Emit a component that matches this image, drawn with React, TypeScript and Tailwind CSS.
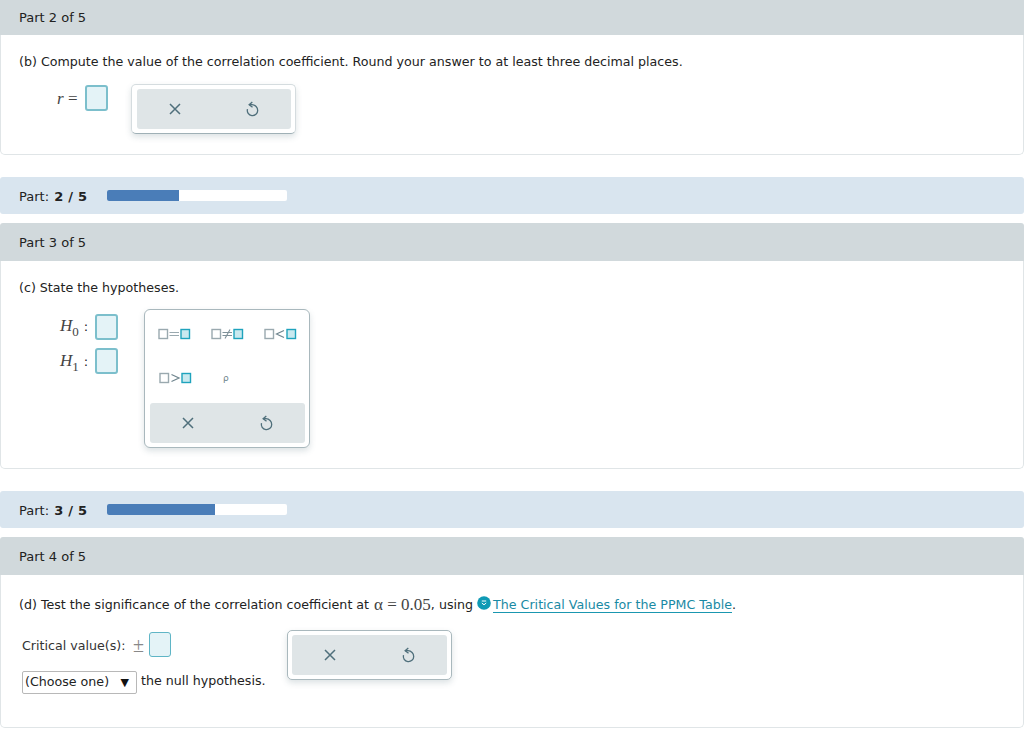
import React from "react";

const F = "font-['DejaVu_Sans',sans-serif]";
const M = "font-['Liberation_Serif',serif]";

function XIcon() {
  return (
    <svg width="14" height="14" viewBox="0 0 14 14" fill="none" stroke="#4f6f7b" strokeWidth="1.5">
      <path d="M2 2 L12 12 M12 2 L2 12" />
    </svg>
  );
}
function UndoIcon() {
  return (
    <svg width="13" height="16" viewBox="0 0 14 17" fill="none" stroke="#4f6f7b" strokeWidth="1.4">
      <path d="M6.8 1 L3.4 3.8 L7 6.6" />
      <path d="M3.4 3.8 H6.5 C10 4 12.6 6.8 12.6 10 A5.6 5.6 0 1 1 1.6 8.6" />
    </svg>
  );
}
function ActionBar({ className }: { className: string }) {
  return (
    <div className={`flex h-10 items-center justify-between rounded-[3px] bg-[#dfe5e7] pl-[31px] pr-[32px] ${className}`}>
      <XIcon />
      <UndoIcon />
    </div>
  );
}
function Box({ className = "" }: { className?: string }) {
  return <div className={`h-[26px] w-[23px] rounded-[3px] border-2 border-[#7cbfcc] bg-[#e4f3f7] ${className}`} />;
}
function Header({ text, h }: { text: string; h: string }) {
  return (
    <div className={`flex items-center bg-[#d1d9dc] pl-[19px] text-[13px] text-[#222] ${h}`}>{text}</div>
  );
}
function Progress({ n, w }: { n: number; w: string }) {
  return (
    <div className="flex h-[37px] items-center rounded-[3px] bg-[#d9e5ef] pl-[19px] text-[13px] text-[#222]">
      <span className="w-[88px] whitespace-pre pt-[2px]">
        Part: <b className="ml-[1px] [word-spacing:0.5px]">{n} / 5</b>
      </span>
      <div className="h-[11px] w-[180px] overflow-hidden rounded-[2px] bg-white">
        <div className={`h-full bg-[#4a7db8] ${w}`} />
      </div>
    </div>
  );
}
function Card({ className, children }: { className: string; children: React.ReactNode }) {
  return (
    <div className={`rounded-b-[5px] border-x border-b border-[#e0e5e7] bg-white text-[12.65px] text-[#222] ${className}`}>
      {children}
    </div>
  );
}
function Sym({ kind }: { kind: "eq" | "ne" | "lt" | "gt" }) {
  return (
    <svg width="33" height="12" viewBox="0 0 33 12" fill="none">
      <rect x="1" y="1.5" width="8.5" height="9" fill="#fff" stroke="#9aa9af" strokeWidth="1.4" />
      {kind === "eq" && <path d="M11.5 4.5 H21 M11.5 7.5 H21" stroke="#9aa9af" strokeWidth="1.2" />}
      {kind === "ne" && <path d="M11.5 4.5 H21 M11.5 7.5 H21 M19 1.5 L14 10.5" stroke="#7f9199" strokeWidth="1.1" />}
      {kind === "lt" && <path d="M20 2.5 L12.5 6 L20 9.5" stroke="#6f858e" strokeWidth="1.2" />}
      {kind === "gt" && <path d="M12.5 2.5 L20 6 L12.5 9.5" stroke="#6f858e" strokeWidth="1.2" />}
      <rect x="23" y="1.5" width="8.5" height="9" fill="#c9e9ef" stroke="#1fa3bd" strokeWidth="1.4" />
    </svg>
  );
}

export default function App() {
  return (
    <div className={`h-[734px] w-[1024px] overflow-hidden bg-white ${F}`}>
      <Header text="Part 2 of 5" h="h-[35px]" />
      <Card className="h-[120px]">
        <p className="ml-[18px] pt-[19px] leading-4">
          (b) Compute the value of the correlation coefficient. Round your answer to at least three decimal places.
        </p>
        <div className="mt-[14px] flex items-start">
          <div className={`ml-[56px] mt-[7px] w-[28px] whitespace-pre text-[17px] leading-4 text-[#444] ${M}`}>
            <i>r</i> =
          </div>
          <Box className="mt-px" />
          <div className="ml-[23px] h-[50px] w-[165px] rounded-[5px] border border-[#d5dcdf] border-b-[#9fb0b6] bg-white p-[4px] shadow-[0_3px_6px_rgba(80,110,120,0.2)]">
            <ActionBar className="ml-px w-[154px]" />
          </div>
        </div>
      </Card>
      <div className="mt-[22px]">
        <Progress n={2} w="w-[72px]" />
      </div>
      <div className="mt-[9px]">
        <Header text="Part 3 of 5" h="h-[38px] rounded-t-[3px] pt-[2px]" />
      </div>
      <Card className="h-[208px]">
        <p className="ml-[18px] pt-[19px] leading-4">(c) State the hypotheses.</p>
        <div className="mt-[13px] flex items-start">
          <div className="ml-[59px] mt-[7px] w-[35px]">
            <div className={`whitespace-pre text-[17px] leading-[20px] text-[#444] ${M}`}>
              <i>H</i>
              <sub className="-bottom-[5px] text-[13px]">0</sub>
              <span className={`ml-[5px] text-[13px] text-[#222] ${F}`}>:</span>
            </div>
            <div className={`mt-[14px] whitespace-pre text-[17px] leading-[20px] text-[#444] ${M}`}>
              <i>H</i>
              <sub className="-bottom-[5px] text-[13px]">1</sub>
              <span className={`ml-[5px] text-[13px] text-[#222] ${F}`}>:</span>
            </div>
          </div>
          <div className="mt-[5px] flex flex-col gap-2">
            <Box />
            <Box />
          </div>
          <div className="ml-[26px] h-[139px] w-[166px] rounded-[6px] border border-[#a9b8bd] bg-white py-[5px] pl-[5px] pr-[4px] shadow-[0_3px_6px_rgba(80,110,120,0.2)]">
            <div className="grid h-[88px] grid-cols-[53px_53px_53px] grid-rows-[45px_43px] pl-[8px]">
              <div className="mt-[13px]"><Sym kind="eq" /></div>
              <div className="mt-[13px]"><Sym kind="ne" /></div>
              <div className="mt-[13px]"><Sym kind="lt" /></div>
              <div className="mt-[12px] pl-[1px]"><Sym kind="gt" /></div>
              <div className="mt-[12px] pl-[12px] text-[9px] leading-[12px] text-[#6f858e]">ρ</div>
            </div>
            <ActionBar className="" />
          </div>
        </div>
      </Card>
      <div className="mt-[22px]">
        <Progress n={3} w="w-[108px]" />
      </div>
      <div className="mt-[9px]">
        <Header text="Part 4 of 5" h="h-[38px] rounded-t-[3px] pt-[2px]" />
      </div>
      <Card className="h-[153px]">
        <p className="ml-[18px] flex h-[38px] items-center whitespace-pre pt-[22px] leading-4">
          (d) Test the significance of the correlation coefficient at{" "}
          <span className={`ml-[1px] text-[17px] text-[#444] ${M}`}>α = 0.05</span>, using{" "}
          <svg width="14" height="14" viewBox="0 0 14 14" className="-mt-[5px] mr-[2px]">
            <circle cx="7" cy="7" r="6.8" fill="#0f9ab5" />
            <path d="M4.8 5 H9.2 M4.8 7 L7 8.8 L9.2 7" stroke="#fff" strokeWidth="1" fill="none" />
          </svg>
          <a className="border-b border-[#1a97b0] leading-[14px] text-[#1a8aa4]">The Critical Values for the PPMC Table</a>.
        </p>
        <div className="mt-[19px] flex items-start">
          <div className="ml-[21px] w-[265px]">
            <div className="flex items-center">
              <span className="w-[111px] whitespace-pre pt-[3px] text-[#333]">Critical value(s): </span>
              <span className={`w-[16px] text-[20px] leading-4 text-[#888] ${M}`}>±</span>
              <Box className="!h-[25px] !w-[22px] !border !border-[#5fb5c6]" />
            </div>
            <div className="mt-[14px] flex items-center">
              <div className="flex h-[23px] w-[115px] items-center justify-between rounded-[2px] border border-[#b8b8b8] pl-[2px] pr-[7px] leading-none">
                <span>(Choose one)</span>
                <span className="text-[11px] text-[#111]">▼</span>
              </div>
              <span className="-mt-[2px] ml-[4px] whitespace-pre">the null hypothesis.</span>
            </div>
          </div>
          <div className="-mt-[2px] h-[50px] w-[165px] rounded-[5px] border border-[#a9b8bd] bg-white p-[4px] shadow-[0_3px_6px_rgba(80,110,120,0.2)]">
            <ActionBar className="w-[155px]" />
          </div>
        </div>
      </Card>
    </div>
  );
}
